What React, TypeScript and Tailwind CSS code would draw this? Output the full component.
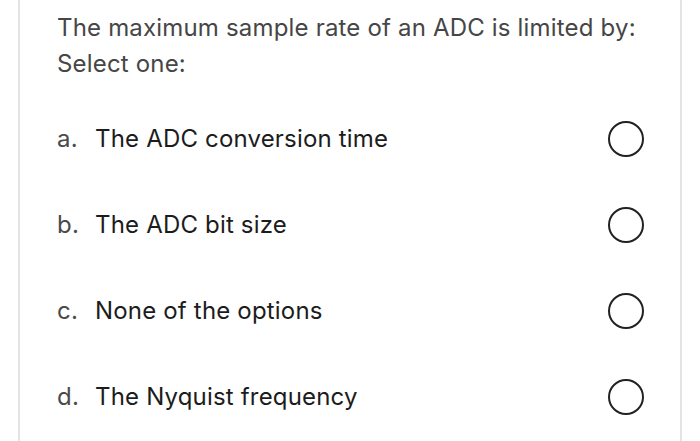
import React from "react";

const options = [
  { letter: "a.", text: "The ADC conversion time" },
  { letter: "b.", text: "The ADC bit size" },
  { letter: "c.", text: "None of the options" },
  { letter: "d.", text: "The Nyquist frequency" },
];

const App: React.FC = () => {
  return (
    <div
      className="w-[700px] h-[441px] bg-white flex overflow-hidden tracking-[0.18px]"
      style={{ fontFamily: 'Inter, "Liberation Sans", Arial, sans-serif' }}
    >
      <div className="w-[18px] shrink-0" />
      <div className="w-[664px] border-l-2 border-r-2 border-[#e4e4e4] pl-[37px] pr-[36px] pt-[10px]">
        <div className="text-[24px] leading-[36px] text-[#464646]">
          <p>The maximum sample rate of an ADC is limited by:</p>
          <p>Select one:</p>
        </div>
        <div className="mt-[14px] flex flex-col">
          {options.map((o) => (
            <label key={o.letter} className="h-[86px] flex items-center">
              <span className="w-[38px] text-[24px] text-[#4a4a4a]">{o.letter}</span>
              <span className="flex-1 text-[24px] text-[#1c1c1c]">{o.text}</span>
              <span className="w-[36px] h-[36px] rounded-full border-2 border-[#222]" />
            </label>
          ))}
        </div>
      </div>
    </div>
  );
};

export default App;
